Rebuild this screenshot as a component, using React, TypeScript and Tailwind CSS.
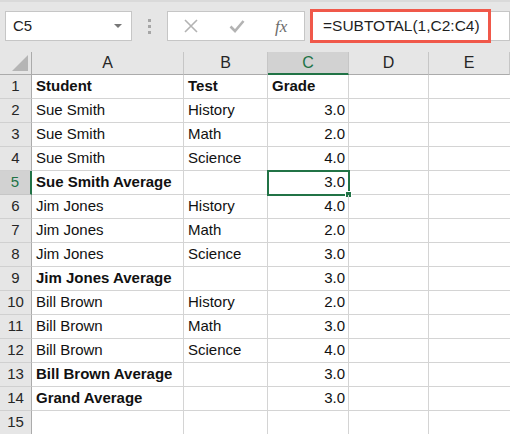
import React from "react";

type Row = { a: string; b: string; c: string; bold?: boolean };

const rows: Row[] = [
  { a: "Student", b: "Test", c: "Grade", bold: true },
  { a: "Sue Smith", b: "History", c: "3.0" },
  { a: "Sue Smith", b: "Math", c: "2.0" },
  { a: "Sue Smith", b: "Science", c: "4.0" },
  { a: "Sue Smith Average", b: "", c: "3.0", bold: true },
  { a: "Jim Jones", b: "History", c: "4.0" },
  { a: "Jim Jones", b: "Math", c: "2.0" },
  { a: "Jim Jones", b: "Science", c: "3.0" },
  { a: "Jim Jones Average", b: "", c: "3.0", bold: true },
  { a: "Bill Brown", b: "History", c: "2.0" },
  { a: "Bill Brown", b: "Math", c: "3.0" },
  { a: "Bill Brown", b: "Science", c: "4.0" },
  { a: "Bill Brown Average", b: "", c: "3.0", bold: true },
  { a: "Grand Average", b: "", c: "3.0", bold: true },
  { a: "", b: "", c: "" },
];

const cols = ["A", "B", "C", "D", "E"];

const Toolbar = () => (
  <div className="flex items-start h-[52px] bg-[#e6e6e6] pt-[9px] border-t-2 border-[#dadada]">
    {/* name box */}
    <div className="ml-[5px] w-[127px] h-[30px] bg-white border border-[#c6c6c6] flex items-center justify-between pl-[7px] pr-[9px]">
      <span className="text-[15px] text-[#222]">C5</span>
      <span className="w-0 h-0 border-l-[4px] border-r-[4px] border-t-[4px] border-l-transparent border-r-transparent border-t-[#777]" />
    </div>
    {/* dots */}
    <div className="ml-[16px] mt-[8px] flex flex-col gap-[3px]">
      <span className="w-[3px] h-[3px] bg-[#a6a6a6]" />
      <span className="w-[3px] h-[3px] bg-[#a6a6a6]" />
      <span className="w-[3px] h-[3px] bg-[#a6a6a6]" />
    </div>
    {/* cancel / enter / fx */}
    <div className="ml-[16px] w-[138px] h-[30px] bg-white border border-[#c6c6c6] flex items-center">
      <svg width="14" height="14" viewBox="0 0 14 14" className="ml-[16px]">
        <path d="M1 1 L13 13 M13 1 L1 13" stroke="#b3b3b3" strokeWidth="1.6" fill="none" />
      </svg>
      <svg width="16" height="14" viewBox="0 0 16 14" className="ml-[31px]">
        <path d="M1.5 7.5 L6 12 L14.5 2" stroke="#b3b3b3" strokeWidth="2.6" fill="none" />
      </svg>
      <span
        className="ml-[30px] text-[17px] italic text-[#6b6b6b] leading-none"
        style={{ fontFamily: '"Liberation Serif", serif' }}
      >
        fx
      </span>
    </div>
    {/* formula input */}
    <div className="relative ml-[5px] flex-1 h-[30px] bg-white border border-[#c6c6c6] flex items-center pl-[12px]">
      <span className="text-[15.5px] text-[#1f1f1f]">=SUBTOTAL(1,C2:C4)</span>
      <div className="absolute left-[-1px] top-[-3px] w-[181px] h-[34px] border-[3px] border-[#f0584a]" />
    </div>
  </div>
);

export default function App() {
  return (
    <div
      className="w-[510px] h-[434px] overflow-hidden bg-white text-[#111]"
      style={{ fontFamily: '"Liberation Sans", Arial, sans-serif' }}
    >
      <Toolbar />
      <div className="grid grid-cols-[32px_152px_84px_81px_80px_81px]">
        {/* header row */}
        <div className="h-[23px] bg-[#e6e6e6] border-r border-b border-[#ababab] flex items-end justify-end pr-[3px] pb-[3px]">
          <svg width="16" height="16" viewBox="0 0 16 16">
            <polygon points="16,0 16,16 0,16" fill="#b5b5b5" />
          </svg>
        </div>
        {cols.map((c) =>
          c === "C" ? (
            <div
              key={c}
              className="h-[23px] bg-[#d2d2d2] border-r border-[#c6c6c6] border-b-2 border-b-[#217346] flex items-center justify-center text-[16px] text-[#217346]"
            >
              {c}
            </div>
          ) : (
            <div
              key={c}
              className="h-[23px] bg-[#e6e6e6] border-r border-b border-r-[#c6c6c6] border-b-[#ababab] flex items-center justify-center text-[16px] text-[#262626]"
            >
              {c}
            </div>
          )
        )}
        {rows.map((r, i) => {
          const n = i + 1;
          const sel = n === 5;
          return (
            <React.Fragment key={n}>
              {sel ? (
                <div className="h-[24px] bg-[#d2d2d2] border-b border-[#c6c6c6] border-r-2 border-r-[#217346] flex items-center justify-center text-[15px] text-[#217346]">
                  {n}
                </div>
              ) : (
                <div className="h-[24px] bg-[#e6e6e6] border-b border-r border-b-[#d0d0d0] border-r-[#ababab] flex items-center justify-center text-[15px] text-[#262626]">
                  {n}
                </div>
              )}
              <div
                className={`h-[24px] border-r border-b border-[#d4d4d4] flex items-center pl-[4px] text-[15px] whitespace-nowrap ${
                  r.bold ? "font-bold" : ""
                }`}
              >
                {r.a}
              </div>
              <div
                className={`h-[24px] border-r border-b border-[#d4d4d4] flex items-center pl-[4px] text-[15px] whitespace-nowrap ${
                  n === 1 ? "font-bold" : ""
                }`}
              >
                {r.b}
              </div>
              <div
                className={`relative h-[24px] border-r border-b border-[#d4d4d4] flex items-center text-[15px] whitespace-nowrap ${
                  n === 1 ? "font-bold justify-start pl-[4px]" : "justify-end pr-[3px]"
                }`}
              >
                {r.c}
                {sel && (
                  <>
                    <div className="absolute left-[-1px] top-[-1px] w-[83px] h-[26px] border-2 border-[#217346]" />
                    <div className="absolute right-[-4px] bottom-[-4px] w-[7px] h-[7px] bg-[#217346] border border-white" />
                  </>
                )}
              </div>
              <div className="h-[24px] border-r border-b border-[#d4d4d4]" />
              <div className="h-[24px] border-b border-[#d4d4d4]" />
            </React.Fragment>
          );
        })}
      </div>
    </div>
  );
}
